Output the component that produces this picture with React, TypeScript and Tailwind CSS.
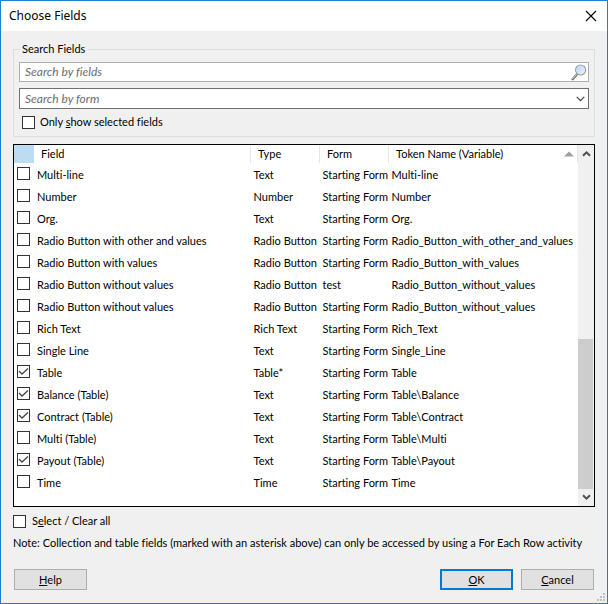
import { useState } from 'react';

type Field = {
  name: string;
  type: string;
  form: string;
  token: string;
};

const FORM = 'Starting Form';

const FIELDS: Field[] = [
  { name: 'Multi-line', type: 'Text', form: FORM, token: 'Multi-line' },
  { name: 'Number', type: 'Number', form: FORM, token: 'Number' },
  { name: 'Org.', type: 'Text', form: FORM, token: 'Org.' },
  { name: 'Radio Button with other and values', type: 'Radio Button', form: FORM, token: 'Radio_Button_with_other_and_values' },
  { name: 'Radio Button with values', type: 'Radio Button', form: FORM, token: 'Radio_Button_with_values' },
  { name: 'Radio Button without values', type: 'Radio Button', form: 'test', token: 'Radio_Button_without_values' },
  { name: 'Radio Button without values', type: 'Radio Button', form: FORM, token: 'Radio_Button_without_values' },
  { name: 'Rich Text', type: 'Rich Text', form: FORM, token: 'Rich_Text' },
  { name: 'Single Line', type: 'Text', form: FORM, token: 'Single_Line' },
  { name: 'Table', type: 'Table*', form: FORM, token: 'Table' },
  { name: 'Balance (Table)', type: 'Text', form: FORM, token: 'Table\\Balance' },
  { name: 'Contract (Table)', type: 'Text', form: FORM, token: 'Table\\Contract' },
  { name: 'Multi (Table)', type: 'Text', form: FORM, token: 'Table\\Multi' },
  { name: 'Payout (Table)', type: 'Text', form: FORM, token: 'Table\\Payout' },
  { name: 'Time', type: 'Time', form: FORM, token: 'Time' },
];

function CheckBox({ id, checked, onChange }: { id: string; checked: boolean; onChange: () => void }) {
  return (
    <span className="relative block size-[13px] shrink-0">
      <input
        id={id}
        type="checkbox"
        checked={checked}
        onChange={onChange}
        className="block size-[13px] appearance-none border border-[#333333] bg-white"
      />
      {checked && (
        <svg className="pointer-events-none absolute inset-0" width="13" height="13" viewBox="0 0 13 13" fill="none">
          <path d="M2 6l3 3L11 3.4" stroke="#444" strokeWidth="1.3" />
        </svg>
      )}
    </span>
  );
}

function SearchIcon() {
  return (
    <svg width="16" height="17" viewBox="0 0 16 17" fill="none">
      <defs>
        <linearGradient id="lens" x1="0" y1="0" x2="1" y2="1">
          <stop offset="0" stopColor="#a9cdf5" />
          <stop offset="1" stopColor="#f2f9ff" />
        </linearGradient>
      </defs>
      <path d="M6 10.2L1.6 15.2" stroke="#777" strokeWidth="2.4" strokeLinecap="round" />
      <path d="M6 9.8L1.6 14.7" stroke="#c4c4c4" strokeWidth="1" strokeLinecap="round" />
      <circle cx="9.6" cy="6" r="5" fill="url(#lens)" stroke="#9a9a9a" strokeWidth="1.2" />
      <circle cx="9.6" cy="6" r="4" stroke="#dceafa" strokeWidth="0.8" />
    </svg>
  );
}

function ScrollArrow({ down = false }: { down?: boolean }) {
  return (
    <button type="button" aria-label={down ? 'Scroll down' : 'Scroll up'} className="flex h-[17px] items-center justify-center">
      <svg width="9" height="7" viewBox="0 0 9 7" fill="none" stroke="#505050" strokeWidth="2">
        <path d={down ? 'M1 1.2l3.5 3.5L8 1.2' : 'M1 5.8l3.5-3.5L8 5.8'} />
      </svg>
    </button>
  );
}

export default function App() {
  const [query, setQuery] = useState('');
  const [onlySelected, setOnlySelected] = useState(false);
  const [selected, setSelected] = useState<number[]>([9, 10, 11, 13]);

  const allSelected = selected.length === FIELDS.length;

  function toggle(index: number) {
    setSelected(prev => (prev.includes(index) ? prev.filter(i => i !== index) : [...prev, index]));
  }

  const rows = FIELDS.map((field, index) => ({ ...field, index })).filter(
    row => row.name.toLowerCase().includes(query.toLowerCase()) && (!onlySelected || selected.includes(row.index))
  );

  return (
    <div className="flex min-h-screen flex-col border border-[#1c7fd6] bg-[#f0f0f0] font-[Lato,Arial,sans-serif] text-[11px] leading-[14px] text-black [font-variant-ligatures:none]">
      {/* Title bar */}
      <header className="flex h-[30px] items-center justify-between bg-white px-2">
        <h1 className="font-['Noto_Sans',sans-serif] text-[12px]">Choose Fields</h1>
        <button type="button" aria-label="Close" className="flex size-4 items-center justify-center">
          <svg width="12" height="12" viewBox="0 0 12 12" stroke="#000" strokeWidth="1.1">
            <path d="M1 1l10 10M11 1L1 11" />
          </svg>
        </button>
      </header>

      <main className="flex flex-1 flex-col px-3 pt-[11px]">
        {/* Search */}
        <fieldset className="border border-[#dcdcdc] px-[5px] pb-[7px]">
          <legend className="ml-[1px] px-[2px]">Search Fields</legend>
          <div className="mt-[6px] flex h-5 items-center border border-[#abadb3] bg-white pr-[1px]">
            <input
              type="text"
              aria-label="Search by fields"
              placeholder="Search by fields"
              value={query}
              onChange={e => setQuery(e.target.value)}
              className="min-w-0 flex-1 px-[5px] text-[12px] italic outline-none placeholder:text-[#6d6d6d]"
            />
            <SearchIcon />
          </div>
          <div className="relative mt-[6px]">
            <select
              aria-label="Search by form"
              className="block h-[21px] w-full appearance-none border border-[#707070] bg-white px-[5px] text-[12px] text-[#6d6d6d] italic"
            >
              <option>Search by form</option>
              <option>Starting Form</option>
              <option>test</option>
            </select>
            <svg className="pointer-events-none absolute top-2 right-1" width="9" height="6" viewBox="0 0 9 6" fill="none">
              <path d="M0.7 0.8l3.8 3.8L8.3 0.8" stroke="#444" strokeWidth="1.2" />
            </svg>
          </div>
          <div className="mt-[6px] ml-[3px] flex items-center gap-[5px]">
            <CheckBox id="only-selected" checked={onlySelected} onChange={() => setOnlySelected(!onlySelected)} />
            <label htmlFor="only-selected">
              Only <u>s</u>how selected fields
            </label>
          </div>
        </fieldset>

        {/* Field list */}
        <div className="mt-[7px] flex min-h-[363px] border border-black bg-white">
          <div className="min-w-0 flex-1">
            <table className="w-full table-fixed border-collapse text-left whitespace-nowrap">
              <colgroup>
                <col className="w-5" />
                <col />
                <col className="w-[69px]" />
                <col className="w-[69px]" />
                <col className="w-[189px]" />
              </colgroup>
              <thead>
                <tr className="h-[18px]">
                  <th className="bg-[#bcdcf4] p-0" aria-label="Selected" />
                  <th className="border-r border-[#e5e5e5] p-0 pl-[7px] font-normal">Field</th>
                  <th className="border-r border-[#e5e5e5] p-0 pl-[7px] font-normal">Type</th>
                  <th className="border-r border-[#e5e5e5] p-0 pl-[7px] font-normal">Form</th>
                  <th className="border-r border-[#e5e5e5] p-0 pl-[7px] font-normal">
                    <span className="flex items-center justify-between pr-[3px]">
                      Token Name (Variable)
                      <svg width="10" height="6" viewBox="0 0 10 6">
                        <path d="M0 5.5L5 0.5l5 5z" fill="#a0a0a0" />
                      </svg>
                    </span>
                  </th>
                </tr>
              </thead>
              <tbody>
                {rows.map(row => (
                  <tr key={row.index} className="h-[22px]">
                    <td className="p-0 pb-[2px] pl-[3px]">
                      <CheckBox id={`field-${row.index}`} checked={selected.includes(row.index)} onChange={() => toggle(row.index)} />
                    </td>
                    <td className="p-0 pt-[2px] pl-[3px]">
                      <label htmlFor={`field-${row.index}`}>{row.name}</label>
                    </td>
                    <td className="p-0 pt-[2px] pl-[3px]">{row.type}</td>
                    <td className="p-0 pt-[2px] pl-[3px]">{row.form}</td>
                    <td className="p-0 pt-[2px] pl-[3px]">{row.token}</td>
                  </tr>
                ))}
              </tbody>
            </table>
          </div>
          {/* Scroll bar */}
          <div className="flex w-4 flex-col bg-[#f0f0f0]">
            <ScrollArrow />
            <div className="flex flex-1 flex-col justify-end pr-[1px]">
              <div className="h-[150px] bg-[#cdcdcd]" />
            </div>
            <ScrollArrow down />
          </div>
        </div>

        <div className="mt-[7px] flex items-center gap-[6px]">
          <CheckBox
            id="select-all"
            checked={allSelected}
            onChange={() => setSelected(allSelected ? [] : FIELDS.map((_, i) => i))}
          />
          <label htmlFor="select-all">
            S<u>e</u>lect / Clear all
          </label>
        </div>
        <p className="mt-2">
          Note: Collection and table fields (marked with an asterisk above) can only be accessed by using a For Each Row activity
        </p>

        {/* Buttons */}
        <div className="mt-[19px] flex gap-2 px-[1px]">
          <button type="button" className="mr-auto h-[21px] w-[73px] border border-[#adadad] bg-[#e1e1e1]">
            <u>H</u>elp
          </button>
          <button type="button" className="h-[21px] w-[73px] border-2 border-[#0078d7] bg-[#e1e1e1]">
            <u>O</u>K
          </button>
          <button type="button" className="h-[21px] w-[73px] border border-[#adadad] bg-[#e1e1e1]">
            <u>C</u>ancel
          </button>
        </div>
      </main>

      <footer className="flex justify-end pt-[3px] pr-[2px] pb-[2px]">
        <svg width="8" height="8" viewBox="0 0 8 8" fill="#bfbfbf">
          <path d="M6 0h2v2H6zM3 3h2v2H3zM6 3h2v2H6zM0 6h2v2H0zM3 6h2v2H3zM6 6h2v2H6z" />
        </svg>
      </footer>
    </div>
  );
}
